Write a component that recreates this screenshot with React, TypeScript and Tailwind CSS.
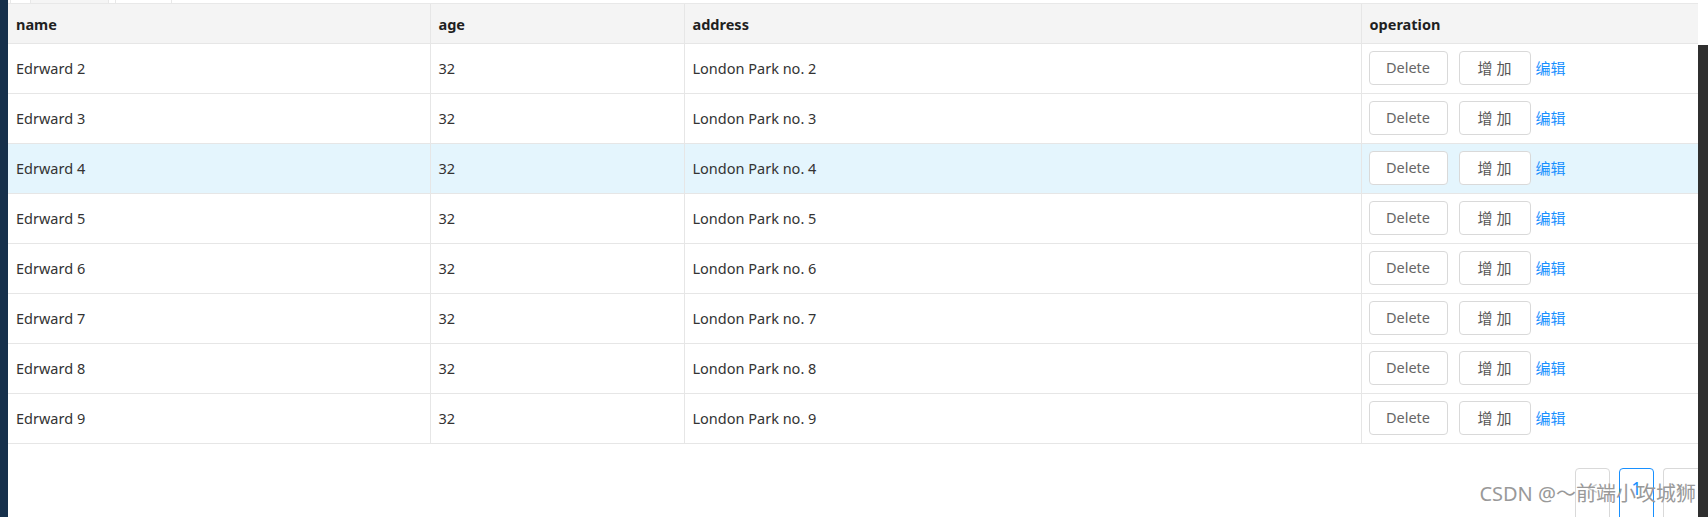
import React from "react";

const rows = [2, 3, 4, 5, 6, 7, 8, 9].map((n) => ({
  key: n,
  name: `Edrward ${n}`,
  age: 32,
  address: `London Park no. ${n}`,
}));

const font = { fontFamily: '"Noto Sans", "Noto Sans CJK SC", sans-serif' };

const App = () => {
  return (
    <div className="flex h-[517px] w-[1708px] overflow-hidden bg-white text-[14.5px] text-[#333]" style={font}>
      <div className="w-[8px] shrink-0 bg-[#16304b]" />
      <div className="relative flex w-[1690px] flex-col overflow-hidden">
        {/* tabs remnants */}
        <div className="flex h-[4px] shrink-0 items-stretch border-b border-[#e8e8e8]">
          <div className="ml-[2px] w-[20px] border-l border-[#e8e8e8]" />
          <div className="w-[79px] border-x border-[#e8e8e8] bg-[#f5f5f5]" />
          <div className="ml-[6px] w-[57px] border-x border-[#e8e8e8] bg-white" />
        </div>
        <table className="w-[1690px] shrink-0 table-fixed border-collapse">
          <colgroup>
            <col className="w-[422px]" />
            <col className="w-[254px]" />
            <col className="w-[677px]" />
            <col className="w-[337px]" />
          </colgroup>
          <thead>
            <tr className="h-[39px] bg-[#f4f4f4] text-left">
              <th className="border-b border-[#e6e6e6] px-[8px] pt-[3px] font-bold text-[#1f1f1f]">name</th>
              <th className="border-b border-l border-[#e6e6e6] px-[8px] pt-[3px] font-bold text-[#1f1f1f]">age</th>
              <th className="border-b border-l border-[#e6e6e6] px-[8px] pt-[3px] font-bold text-[#1f1f1f]">address</th>
              <th className="border-b border-l border-[#e6e6e6] px-[8px] pt-[3px] font-bold text-[#1f1f1f]">operation</th>
            </tr>
          </thead>
          <tbody>
            {rows.map((r) => (
              <tr key={r.key} className={r.key === 4 ? "h-[50px] bg-[#e4f5fd]" : "h-[50px]"}>
                <td className="border-b border-[#e6e6e6] px-[8px] pt-[2px]">{r.name}</td>
                <td className="border-b border-l border-[#e6e6e6] px-[8px] pt-[2px]">{r.age}</td>
                <td className="border-b border-l border-[#e6e6e6] px-[8px] pt-[2px]">{r.address}</td>
                <td className="border-b border-l border-[#e6e6e6] pl-[7px]">
                  <div className="flex items-center">
                    <button className="h-[34px] w-[79px] rounded-[4px] border border-[#d9d9d9] bg-white text-[#666]">
                      Delete
                    </button>
                    <button className="ml-[11px] h-[34px] w-[72px] rounded-[4px] border border-[#d9d9d9] bg-white text-[15px] text-[#555]">
                      增 加
                    </button>
                    <a className="ml-[5px] cursor-pointer text-[15px] text-[#1890ff]">编辑</a>
                  </div>
                </td>
              </tr>
            ))}
          </tbody>
        </table>
        <div className="mt-[24px] flex shrink-0 justify-end gap-[9px]">
          <button className="flex h-[54px] w-[35px] items-start justify-center rounded-[4px] border border-[#d9d9d9] pt-[6px] text-[18px] text-[#ccc]">
            &lt;
          </button>
          <button className="flex h-[54px] w-[35px] items-start justify-center rounded-[4px] border border-[#1890ff] pt-[6px] text-[18px] text-[#1890ff]">
            1
          </button>
          <button className="flex h-[54px] w-[35px] items-start justify-center rounded-l-[4px] border border-r-0 border-[#d9d9d9] pt-[6px] text-[18px] text-[#ccc]">
            &gt;
          </button>
        </div>
        <div className="absolute bottom-[8px] right-[2px] text-[20px] text-[#999]">
          CSDN @～前端小攻城狮
        </div>
      </div>
      <div className="flex w-[10px] shrink-0 flex-col">
        <div className="h-[45px] bg-white" />
        <div className="flex-1 bg-[#2f2f2f]" />
      </div>
    </div>
  );
};

export default App;
